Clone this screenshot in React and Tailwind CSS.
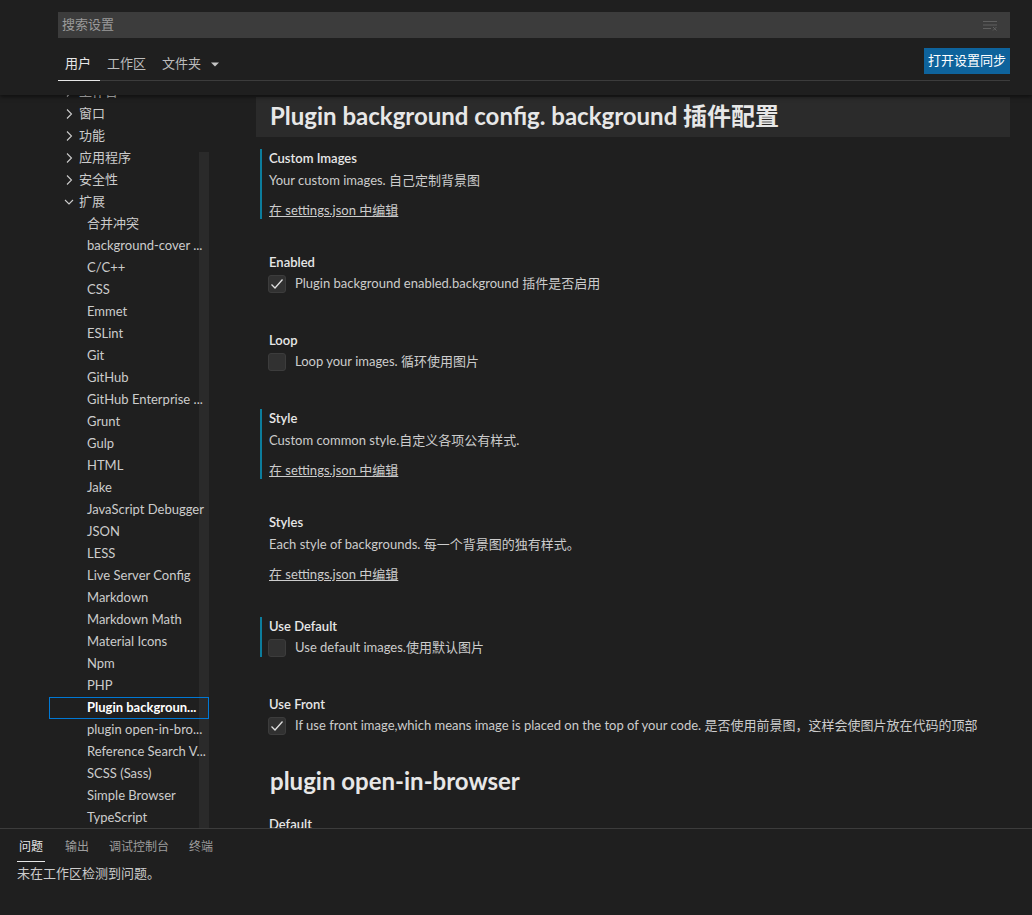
import { useState } from "react";

const groups = [
  { label: "工作台", top: true },
  { label: "窗口", top: true },
  { label: "功能", top: true },
  { label: "应用程序", top: true },
  { label: "安全性", top: true },
  { label: "扩展", top: true, open: true },
  { label: "合并冲突" },
  { label: "background-cover ..." },
  { label: "C/C++" },
  { label: "CSS" },
  { label: "Emmet" },
  { label: "ESLint" },
  { label: "Git" },
  { label: "GitHub" },
  { label: "GitHub Enterprise ..." },
  { label: "Grunt" },
  { label: "Gulp" },
  { label: "HTML" },
  { label: "Jake" },
  { label: "JavaScript Debugger" },
  { label: "JSON" },
  { label: "LESS" },
  { label: "Live Server Config" },
  { label: "Markdown" },
  { label: "Markdown Math" },
  { label: "Material Icons" },
  { label: "Npm" },
  { label: "PHP" },
  { label: "Plugin backgroun...", active: true },
  { label: "plugin open-in-bro..." },
  { label: "Reference Search V..." },
  { label: "SCSS (Sass)" },
  { label: "Simple Browser" },
  { label: "TypeScript" },
];

const settings = [
  {
    title: "Custom Images",
    desc: "Your custom images. 自己定制背景图",
    link: true,
    modified: true,
  },
  {
    title: "Enabled",
    desc: "Plugin background enabled.background 插件是否启用",
    checked: true,
  },
  { title: "Loop", desc: "Loop your images. 循环使用图片", checked: false },
  {
    title: "Style",
    desc: "Custom common style.自定义各项公有样式.",
    link: true,
    modified: true,
  },
  {
    title: "Styles",
    desc: "Each style of backgrounds. 每一个背景图的独有样式。",
    link: true,
  },
  {
    title: "Use Default",
    desc: "Use default images.使用默认图片",
    checked: false,
    modified: true,
  },
  {
    title: "Use Front",
    desc: "If use front image,which means image is placed on the top of your code. 是否使用前景图，这样会使图片放在代码的顶部",
    checked: true,
  },
];

function Chevron({ open }) {
  return (
    <svg width="16" height="16" viewBox="0 0 16 16" fill="none" stroke="currentColor" strokeWidth="1.1">
      {open ? <path d="M4 6l4 4 4-4" /> : <path d="M6 3.5l4.5 4.5L6 12.5" />}
    </svg>
  );
}

function CheckBox({ checked }) {
  return (
    <div className="w-[18px] h-[18px] shrink-0 rounded-[3px] bg-[#313131] border border-[#3c3c3c] flex items-center justify-center text-[#e0e0e0]">
      {checked && (
        <svg width="16" height="16" viewBox="0 0 16 16" fill="none" stroke="currentColor" strokeWidth="1.3">
          <path d="M2.5 8.5l3.5 3.5 7.5-8.5" />
        </svg>
      )}
    </div>
  );
}

export default function App() {
  const [tab, setTab] = useState("用户");

  return (
    <div className="h-[915px] w-full bg-[#1f1f1f] flex flex-col overflow-hidden text-[#cccccc] text-[13px] font-['Segoe_UI',Lato,'Noto_Sans_CJK_SC',sans-serif]">
      {/* header */}
      <div className="relative z-10 h-[95px] shrink-0 bg-[#1f1f1f] pl-[58px] pr-[22px] pt-[12px] shadow-[0_2px_4px_rgba(0,0,0,0.5)]">
        <div className="h-[26px] bg-[#3c3c3c] flex items-center justify-between pl-[4px] pr-[12px]">
          <input
            readOnly
            placeholder="搜索设置"
            className="flex-1 bg-transparent outline-none text-[13px] placeholder:text-[#9a9a9a]"
          />
          <svg width="16" height="16" viewBox="0 0 16 16" fill="none" stroke="#5f5f5f" strokeWidth="1">
            <path d="M1 4.5h14M1 8h14M1 11.5h8" />
            <path d="M11 10l3.5 3.5M14.5 10L11 13.5" />
          </svg>
        </div>
        <div className="mt-[10px] flex justify-between items-start border-b border-[#3c3c3c]">
          <div className="flex h-[32px]">
            {["用户", "工作区", "文件夹"].map((t) => (
              <div
                key={t}
                onClick={() => setTab(t)}
                className={
                  "flex items-center pl-[7px] pr-[9px] cursor-pointer " +
                  (tab === t
                    ? "text-[#e7e7e7] border-b border-[#e7e7e7] -mb-px"
                    : "text-[#bdbdbd]")
                }
              >
                {t}
                {t === "文件夹" && (
                  <svg width="16" height="16" viewBox="0 0 16 16" className="ml-[6px]" fill="#c5c5c5">
                    <path d="M4 6.5h8L8 10.5z" />
                  </svg>
                )}
              </div>
            ))}
          </div>
          <button className="h-[26px] px-[4px] bg-[#0e639c] text-white text-[13px]">打开设置同步</button>
        </div>
      </div>

      {/* body */}
      <div className="flex-1 flex overflow-hidden">
        <div className="relative ml-[49px] w-[160px] shrink-0 overflow-hidden">
          <div className="absolute right-0 top-[57px] bottom-0 w-[10px] bg-[#2a2a2a]" />
          <div className="relative -mt-[14px]">
            {groups.map((g, i) =>
              g.top ? (
                <div key={i} className="h-[22px] flex items-center pl-[12px]">
                  <Chevron open={g.open} />
                  <span className="ml-[2px]">{g.label}</span>
                </div>
              ) : (
                <div
                  key={i}
                  className={
                    "h-[22px] flex items-center whitespace-nowrap overflow-hidden " +
                    (g.active
                      ? "border border-[#0078d4] pl-[37px] font-bold text-white"
                      : "pl-[38px]")
                  }
                >
                  {g.label}
                </div>
              )
            )}
          </div>
        </div>

        <div className="ml-[47px] w-[754px] shrink-0 overflow-hidden pt-[2px]">
          <div className="h-[40px] bg-[#2b2b2b] pl-[14px] pb-[2px] flex items-center text-[24px] font-bold text-[#e7e7e7] whitespace-nowrap">
            Plugin background config. background 插件配置
          </div>
          <div className="ml-[4px]">
            {settings.map((s) => (
              <div key={s.title} className={s.link ? "pt-[12px] pb-[22px]" : "pt-[12px] pb-[26px]"}>
                <div
                  className={
                    "border-l-2 pl-[7px] " + (s.modified ? "border-[#0c7d9d]" : "border-transparent")
                  }
                >
                  <div className="leading-[18px] font-semibold text-[#e7e7e7]">{s.title}</div>
                  {s.link ? (
                    <>
                      <div className="mt-[4px] leading-[18px]">{s.desc}</div>
                      <div className="mt-[12px] leading-[18px] underline">在 settings.json 中编辑</div>
                    </>
                  ) : (
                    <div className="mt-[4px] h-[18px] flex items-center -ml-px whitespace-nowrap">
                      <CheckBox checked={s.checked} />
                      <span className="ml-[9px]">{s.desc}</span>
                    </div>
                  )}
                </div>
              </div>
            ))}
            <div className="pt-[4px] pb-[6px] pl-[10px] h-[42px] leading-[32px] text-[24px] font-bold text-[#e7e7e7]">
              plugin open-in-browser
            </div>
            <div className="pt-[12px] pl-[9px] leading-[18px] font-semibold text-[#e7e7e7]">Default</div>
          </div>
        </div>
      </div>

      {/* panel */}
      <div className="h-[87px] shrink-0 border-t border-[#3c3c3c] bg-[#1f1f1f]">
        <div className="flex gap-[20px] pl-[19px] pt-[10px] text-[12px]">
          <div className="leading-[16px] pb-[6px] px-[2px] -ml-[2px] border-b border-[#e7e7e7] text-[#e7e7e7]">问题</div>
          <div className="leading-[16px] pb-[6px] text-[#9d9d9d]">输出</div>
          <div className="leading-[16px] pb-[6px] text-[#9d9d9d]">调试控制台</div>
          <div className="leading-[16px] pb-[6px] text-[#9d9d9d]">终端</div>
        </div>
        <div className="mt-[2px] pl-[17px] leading-[18px] text-[13px]">未在工作区检测到问题。</div>
      </div>
    </div>
  );
}
